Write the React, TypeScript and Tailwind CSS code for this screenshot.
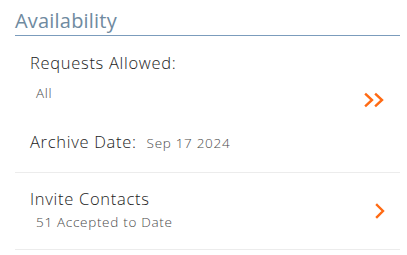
import React from "react";

const Chev = ({ double }: { double?: boolean }) => (
  <svg width={double ? 22 : 12} height="16" viewBox={double ? "0 0 22 16" : "0 0 12 16"} fill="none" stroke="#ff6a13" strokeWidth="2.4" strokeLinecap="square">
    {double ? (
      <>
        <path d="M2 2.5 L8 8 L2 13.5" />
        <path d="M12 2.5 L18 8 L12 13.5" />
      </>
    ) : (
      <path d="M3 2 L9 8 L3 14" />
    )}
  </svg>
);

export default function App() {
  return (
    <div className="w-[407px] h-[255px] bg-white pl-[15px] pr-[7px] pt-[7px]" style={{ fontFamily: "'Open Sans', sans-serif" }}>
      <div className="text-[20px] leading-[27px] tracking-[0.2px] text-[#6f8aa0] border-b border-[#7b9cbc] pb-[1px]">Availability</div>
      <div className="flex items-center border-b border-[#ececec] h-[137px]">
        <div className="flex-1 pl-[15px] -mt-[2px]">
          <div className="text-[16.5px] font-light tracking-[0.7px] text-[#222] leading-[22px]">Requests Allowed:</div>
          <div className="text-[13.5px] font-light tracking-[0.7px] text-[#4a4a4a] pl-[6px] mt-[9px]">All</div>
          <div className="flex items-baseline mt-[27px]">
            <span className="text-[16.5px] font-light tracking-[0.7px] text-[#222]">Archive Date:</span>
            <span className="text-[13.5px] font-light tracking-[0.7px] text-[#4a4a4a] ml-[10px]">Sep 17 2024</span>
          </div>
        </div>
        <div className="pr-[14px] -mt-[8px]"><Chev double /></div>
      </div>
      <div className="flex items-center border-b border-[#ececec] h-[77px]">
        <div className="flex-1 pl-[15px] -mt-[2px]">
          <div className="text-[16.5px] font-light tracking-[0.7px] text-[#222] leading-[22px]">Invite Contacts</div>
          <div className="text-[13.5px] font-light tracking-[0.7px] text-[#4a4a4a] pl-[6px] mt-[2px]">51 Accepted to Date</div>
        </div>
        <div className="pr-[14px]"><Chev /></div>
      </div>
    </div>
  );
}
